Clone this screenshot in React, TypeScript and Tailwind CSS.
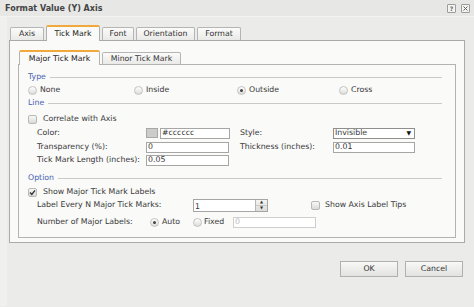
import React from "react";

const font = "font-['DejaVu_Sans',Verdana,sans-serif]";

function OuterTab({ label, width, active }: { label: string; width: number; active?: boolean }) {
  if (active) {
    return (
      <div
        style={{ width }}
        className="relative z-10 -mb-px flex h-[16px] items-center justify-center rounded-t-[2px] border border-b-0 border-t-2 border-[#b0b0ae] border-t-[#f2a93b] bg-[#fafaf8] text-[#222]"
      >
        {label}
      </div>
    );
  }
  return (
    <div
      style={{ width }}
      className="flex h-[13px] items-center justify-center rounded-t-[2px] border border-b-0 border-[#b5b5b3] bg-gradient-to-b from-[#fbfbfa] to-[#e9e9e7] text-[#333]"
    >
      {label}
    </div>
  );
}

function Legend({ label }: { label: string }) {
  return (
    <div className="flex h-[12px] items-center pl-[9px] pr-[13px]">
      <span className="text-[#4762b3]">{label}</span>
      <div className="ml-[4px] h-px flex-1 bg-[#c9c9c7]" />
    </div>
  );
}

function Radio({ checked }: { checked?: boolean }) {
  return (
    <span className="flex h-[9px] w-[9px] shrink-0 items-center justify-center rounded-full border border-[#c2c2c0] bg-gradient-to-b from-[#ffffff] to-[#dcdcda]">
      {checked && <span className="h-[3px] w-[3px] rounded-full bg-[#444]" />}
    </span>
  );
}

function Checkbox({ checked }: { checked?: boolean }) {
  return (
    <span className="flex h-[9px] w-[9px] shrink-0 items-center justify-center rounded-[2px] border border-[#b9b9b7] bg-gradient-to-b from-[#f8f8f7] to-[#dadad8]">
      {checked && (
        <svg width="7" height="7" viewBox="0 0 7 7">
          <path d="M1 3.6 L2.8 5.4 L6 1.4" fill="none" stroke="#333" strokeWidth="1.4" />
        </svg>
      )}
    </span>
  );
}

function Field({ value, width, faded }: { value: string; width: number; faded?: boolean }) {
  return (
    <div
      style={{ width }}
      className={`flex h-[11px] items-center border bg-white pl-[1px] leading-none ${
        faded ? "border-[#cfcfcd] text-[#b5b5b5]" : "border-[#a6a6a4] text-[#333]"
      }`}
    >
      {value}
    </div>
  );
}

export default function App() {
  return (
    <div className={`${font} relative h-[307px] w-[474px] overflow-hidden bg-[#ebecea] text-[7.8px] text-[#383838]`}>
      {/* title bar */}
      <div className="flex h-[17px] items-center justify-between border-b border-[#f3f3f1] bg-[#e7e8e6] pl-[5px] pr-[4px]">
        <span className="pt-[2px] text-[8px] font-bold text-[#444]">Format Value (Y) Axis</span>
        <div className="flex gap-[5px] pt-[1px]">
          <span className="flex h-[9px] w-[9px] items-center justify-center rounded-[1px] border border-[#9c9c9a] bg-[#f3f3f1] text-[6px] font-bold leading-none text-[#666]">
            ?
          </span>
          <span className="flex h-[9px] w-[9px] items-center justify-center rounded-[1px] border border-[#9c9c9a] bg-[#f3f3f1]">
            <svg width="5" height="5" viewBox="0 0 5 5">
              <path d="M0.5 0.5 L4.5 4.5 M4.5 0.5 L0.5 4.5" stroke="#666" strokeWidth="1" />
            </svg>
          </span>
        </div>
      </div>

      <div className="h-[289px] border-l-[7px] border-[#f0f0ee] pl-[2px] pt-[8px]">
        {/* outer tabs */}
        <div className="ml-[1px] flex h-[15px] items-end gap-[2px]">
          <OuterTab label="Axis" width={34} />
          <OuterTab label="Tick Mark" width={54} active />
          <OuterTab label="Font" width={32} />
          <OuterTab label="Orientation" width={59} />
          <OuterTab label="Format" width={44} />
        </div>

        {/* outer panel */}
        <div className="h-[203px] w-[456px] border border-[#abaaa8] bg-[#fafaf8] pt-[9px]">
          {/* inner tabs */}
          <div className="ml-[9px] flex h-[14px] items-end gap-[2px]">
            <div className="relative z-10 -mb-px flex h-[15px] w-[81px] items-center justify-center rounded-t-[2px] border border-b-0 border-t-2 border-[#b3b3b1] border-t-[#f2a93b] bg-[#fafaf8] text-[#222]">
              Major Tick Mark
            </div>
            <div className="flex h-[12px] w-[79px] items-center justify-center rounded-t-[2px] border border-b-0 border-[#b5b5b3] bg-gradient-to-b from-[#fbfbfa] to-[#e9e9e7]">
              Minor Tick Mark
            </div>
          </div>

          {/* inner panel */}
          <div className="ml-[8px] h-[174px] w-[438px] border border-[#b3b3b1] bg-[#fafaf8] pt-[6px]">
            <Legend label="Type" />
            <div className="mt-[1px] flex h-[12px] items-center pl-[9px]">
              {[
                { l: "None", w: 106 },
                { l: "Inside", w: 103 },
                { l: "Outside", w: 102, c: true },
                { l: "Cross", w: 90 },
              ].map((r) => (
                <div key={r.l} style={{ width: r.w }} className="flex items-center">
                  <Radio checked={r.c} />
                  <span className="ml-[3px]">{r.l}</span>
                </div>
              ))}
            </div>

            <div className="mt-[1px]">
              <Legend label="Line" />
            </div>
            <div className="mt-[4px] flex h-[12px] items-center pl-[9px]">
              <Checkbox />
              <span className="ml-[6px]">Correlate with Axis</span>
            </div>

            <div className="mt-[2px] flex h-[12px] items-center pl-[18px]">
              <span className="w-[109px]">Color:</span>
              <span className="h-[10px] w-[12px] border border-[#a8a8a6] bg-[#cccccc]" />
              <div className="ml-[2px]">
                <Field value="#cccccc" width={70} />
              </div>
              <span className="ml-[10px] w-[93px]">Style:</span>
              <div className="flex h-[11px] w-[82px] items-center justify-between border border-[#8e8e8c] bg-white pl-[1px] pr-[3px] leading-none">
                <span>Invisible</span>
                <span className="text-[6px] text-[#111]">▼</span>
              </div>
            </div>

            <div className="mt-[2px] flex h-[12px] items-center pl-[18px]">
              <span className="w-[109px]">Transparency (%):</span>
              <Field value="0" width={83} />
              <span className="ml-[11px] w-[93px]">Thickness (inches):</span>
              <Field value="0.01" width={82} />
            </div>

            <div className="mt-[1px] flex h-[12px] items-center pl-[18px]">
              <span className="w-[109px] whitespace-nowrap">Tick Mark Length (inches):</span>
              <Field value="0.05" width={83} />
            </div>

            <div className="mt-[6px]">
              <Legend label="Option" />
            </div>
            <div className="mt-[2px] flex h-[12px] items-center pl-[9px]">
              <Checkbox checked />
              <span className="ml-[6px]">Show Major Tick Mark Labels</span>
            </div>

            <div className="flex h-[14px] items-center pl-[18px]">
              <span className="w-[156px]">Label Every N Major Tick Marks:</span>
              <div className="flex h-[13px] items-center border border-[#a6a6a4] bg-white">
                <span className="w-[61px] pl-[1px] pt-[3px]">1</span>
                <div className="flex h-full w-[12px] flex-col border-l border-[#b8b8b6] bg-gradient-to-b from-[#f4f4f2] to-[#dcdcda]">
                  <span className="flex flex-1 items-center justify-center border-b border-[#c8c8c6] text-[4px] leading-none text-[#333]">▲</span>
                  <span className="flex flex-1 items-center justify-center text-[4px] leading-none text-[#333]">▼</span>
                </div>
              </div>
              <div className="ml-[43px] flex items-center">
                <Checkbox />
                <span className="ml-[5px]">Show Axis Label Tips</span>
              </div>
            </div>

            <div className="mt-[3px] flex h-[14px] items-center pl-[18px]">
              <span className="w-[113px]">Number of Major Labels:</span>
              <Radio checked />
              <span className="ml-[3px] w-[31px]">Auto</span>
              <Radio />
              <span className="ml-[2px] w-[29px]">Fixed</span>
              <Field value="0" width={83} faded />
            </div>
          </div>
        </div>

        {/* buttons */}
        <div className="mr-[11px] mt-[18px] flex justify-end gap-[7px]">
          <button className="h-[16px] w-[58px] border border-[#b0b0ae] bg-gradient-to-b from-[#f8f8f7] to-[#e2e2e0] text-[7.8px] text-[#333]">
            OK
          </button>
          <button className="h-[16px] w-[58px] border border-[#b0b0ae] bg-gradient-to-b from-[#f8f8f7] to-[#e2e2e0] text-[7.8px] text-[#333]">
            Cancel
          </button>
        </div>
      </div>
    </div>
  );
}
